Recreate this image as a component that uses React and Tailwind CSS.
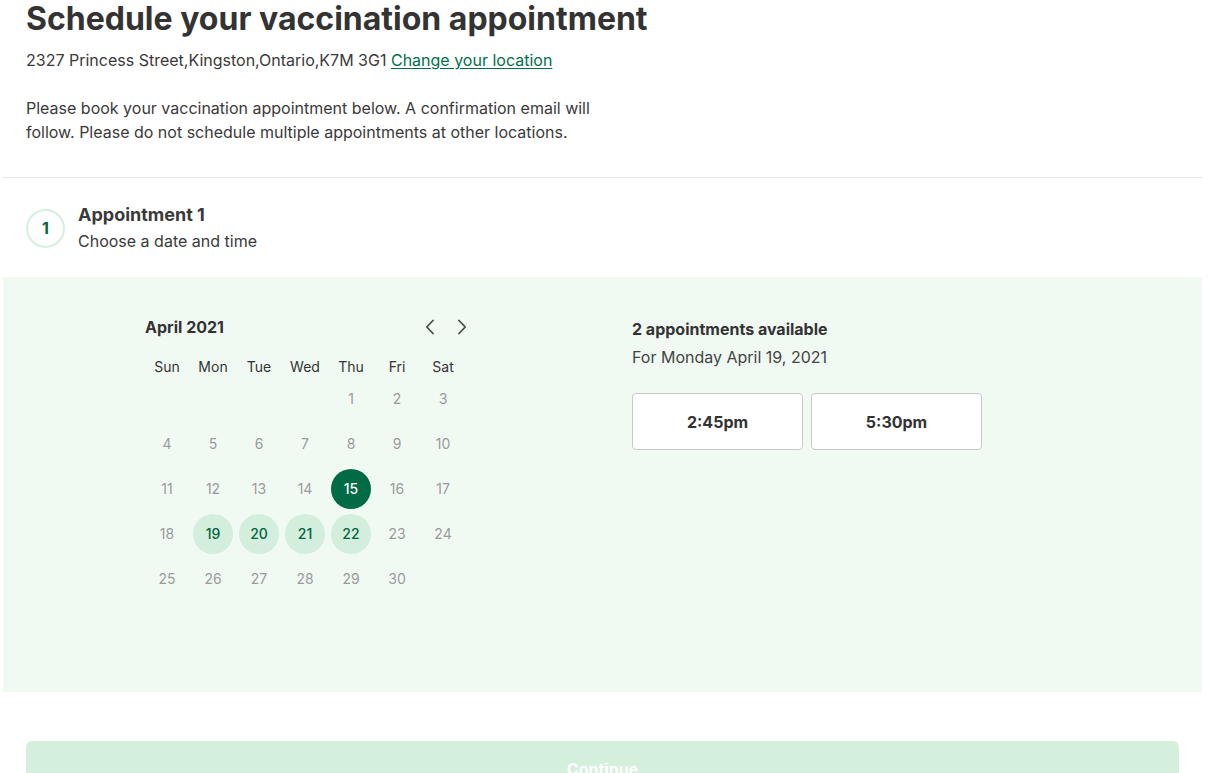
const days = [
  null, null, null, null, 1, 2, 3,
  4, 5, 6, 7, 8, 9, 10,
  11, 12, 13, 14, 15, 16, 17,
  18, 19, 20, 21, 22, 23, 24,
  25, 26, 27, 28, 29, 30, null,
]

const available = [19, 20, 21, 22]
const selected = 15

function Chevron({ dir }) {
  return (
    <svg width="10" height="16" viewBox="0 0 10 16" fill="none" className="text-[#4a4a4a]">
      <path
        d={dir === 'left' ? 'M8 1.5 1.8 8 8 14.5' : 'M2 1.5 8.2 8 2 14.5'}
        stroke="currentColor"
        strokeWidth="1.8"
        strokeLinecap="round"
        strokeLinejoin="round"
      />
    </svg>
  )
}

function Day({ d }) {
  if (!d) return <div className="h-[45px]" />
  let cls = 'text-[#9b9b9b]'
  if (d === selected) cls = 'bg-[#006b45] text-white font-medium'
  else if (available.includes(d)) cls = 'bg-[#d3eedc] text-[#00643f] font-medium'
  return (
    <div className="flex h-[45px] items-center justify-center">
      <span className={`flex h-10 w-10 items-center justify-center rounded-full text-[14px] ${cls}`}>{d}</span>
    </div>
  )
}

function Calendar() {
  return (
    <div className="w-[322px]">
      <div className="flex h-5 items-center">
        <span className="pl-[1px] text-[16px] font-bold text-[#333]">April 2021</span>
        <div className="ml-auto mr-[-1px] flex items-center gap-[22px]">
          <Chevron dir="left" />
          <Chevron dir="right" />
        </div>
      </div>
      <div className="mt-5 grid h-[19px] grid-cols-7 text-center text-[14px] leading-5 text-[#333]">
        {['Sun', 'Mon', 'Tue', 'Wed', 'Thu', 'Fri', 'Sat'].map((n) => (
          <span key={n}>{n}</span>
        ))}
      </div>
      <div className="grid grid-cols-7">
        {days.map((d, i) => (
          <Day key={i} d={d} />
        ))}
      </div>
    </div>
  )
}

function TimeSlot({ label }) {
  return (
    <button
      type="button"
      className="flex h-[57px] w-[171px] items-center justify-center rounded-[4px] border border-[#c9c9c9] bg-white text-[16px] font-bold text-[#333]"
    >
      {label}
    </button>
  )
}

export default function App() {
  return (
    <div className="min-h-screen overflow-hidden bg-white pl-[3px] pr-[6px] font-['Inter',sans-serif] text-[#3a3a3a]">
      <div className="px-[23px]">
        <h1 className="text-[32px] leading-[37px] font-bold text-[#333]">Schedule your vaccination appointment</h1>
        <p className="mt-[11px] text-[16px] leading-6">
          2327 Princess Street,Kingston,Ontario,K7M 3G1{' '}
          <a href="#" className="text-[#00704a] underline underline-offset-2">
            Change your location
          </a>
        </p>
        <p className="mt-6 max-w-[580px] text-[16px] leading-6">
          Please book your vaccination appointment below. A confirmation email will follow. Please do not schedule
          multiple appointments at other locations.
        </p>
      </div>

      <div className="mt-[33px] border-t border-[#e3e3e3]" />

      <div className="flex items-center gap-[13px] px-[23px] pt-[25px] pb-[24px]">
        <div className="flex h-[39px] w-[39px] items-center justify-center rounded-full border-2 border-[#d6efdf] text-[16px] font-bold text-[#00643f]">
          1
        </div>
        <div>
          <div className="text-[18px] leading-6 font-bold text-[#3a3a3a]">Appointment 1</div>
          <div className="mt-[2px] text-[16px] leading-6">Choose a date and time</div>
        </div>
      </div>

      <div className="flex h-[415px] bg-[#f0faf3] pt-[40px] pl-[141px]">
        <Calendar />
        <div className="ml-[166px] pt-[2px]">
          <div className="text-[16px] leading-5 font-bold text-[#333]">2 appointments available</div>
          <div className="mt-[6px] text-[16px] leading-6 text-[#444]">For Monday April 19, 2021</div>
          <div className="mt-6 flex gap-2">
            <TimeSlot label="2:45pm" />
            <TimeSlot label="5:30pm" />
          </div>
        </div>
      </div>

      <div className="px-[23px] pt-[49px]">
        <button
          type="button"
          className="flex h-14 w-full items-center justify-center rounded-[6px] bg-[#d4efdc] text-[16px] font-bold text-white"
        >
          Continue
        </button>
      </div>
    </div>
  )
}
